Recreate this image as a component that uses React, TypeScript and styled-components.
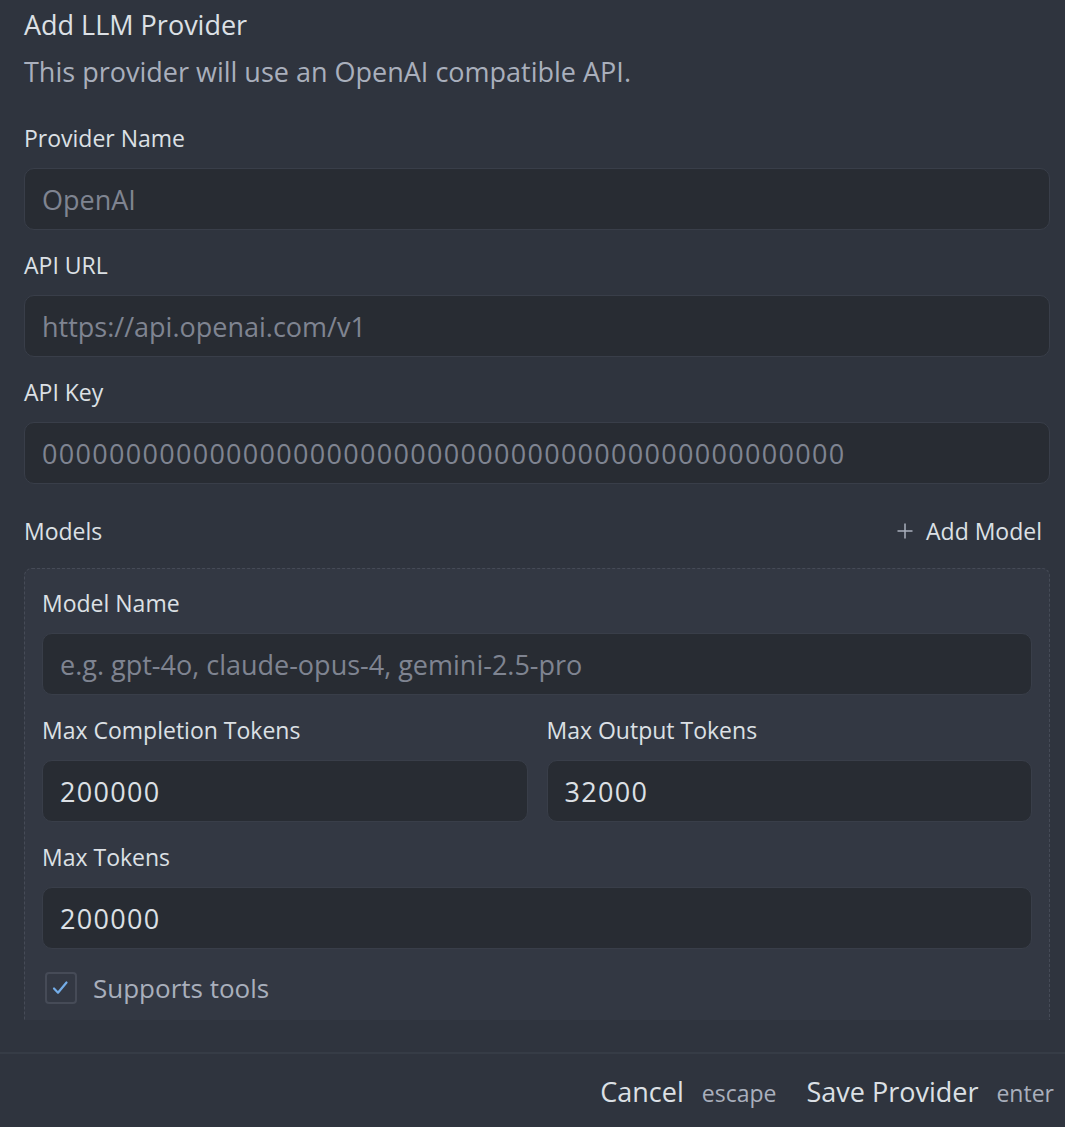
import React from "react";
import styled, { createGlobalStyle } from "styled-components";

const GlobalStyle = createGlobalStyle`
  html, body {
    margin: 0;
    padding: 0;
    background: #2f343e;
    font-family: "Open Sans", "Noto Sans", sans-serif;
    color: #dce0e5;
  }
  * { box-sizing: border-box; }
`;

const Page = styled.div`
  height: 100vh;
  display: flex;
  flex-direction: column;
`;

const Content = styled.div`
  flex: 1;
  min-height: 0;
  overflow: hidden;
  margin-bottom: 32px;
  padding: 8px 15px 0 24px;
  display: flex;
  flex-direction: column;
`;

const Title = styled.h1`
  margin: 0;
  font-size: 27px;
  line-height: 34px;
  font-weight: 400;
  color: #dce0e5;
`;

const Subtitle = styled.p`
  margin: 12.5px 0 0;
  font-size: 27px;
  line-height: 34px;
  color: #a9afbc;
`;

const Form = styled.div`
  margin-top: 35.5px;
  display: flex;
  flex-direction: column;
  gap: 21px;
`;

const Field = styled.div`
  display: flex;
  flex-direction: column;
  gap: 16px;
  min-width: 0;
`;

const Label = styled.label`
  font-size: 23px;
  line-height: 28px;
  color: #dce0e5;
`;

const TextInput = styled.input<{ $numeric?: boolean }>`
  height: 62px;
  width: 100%;
  border: 1px solid #393e49;
  border-radius: 10px;
  background: #282c33;
  padding: 0 17px;
  font-family: inherit;
  font-size: 27px;
  letter-spacing: ${(p) => (p.$numeric ? "1.3px" : "0")};
  color: #dce0e5;
  outline: none;
  &::placeholder {
    color: #7f8491;
  }
`;

const SectionHeader = styled.div`
  margin-top: 33px;
  display: flex;
  align-items: center;
  justify-content: space-between;
`;

const AddButton = styled.button`
  display: flex;
  align-items: center;
  gap: 13px;
  background: transparent;
  border: none;
  padding: 0 8px 0 0;
  font-family: inherit;
  font-size: 23px;
  line-height: 28px;
  color: #dce0e5;
  cursor: pointer;
`;

const ModelCard = styled.div`
  flex-shrink: 0;
  margin-top: 23px;
  border: 1px dashed #464b57;
  border-radius: 8px;
  background: #333843;
  padding: 20px 17px 40px;
  display: flex;
  flex-direction: column;
  gap: 21px;
`;

const TwoCols = styled.div`
  display: grid;
  grid-template-columns: 1fr 1fr;
  gap: 19px;
`;

const CheckRow = styled.label`
  display: flex;
  align-items: center;
  gap: 16px;
  margin: 2px 0 0 3px;
  font-size: 26px;
  line-height: 32px;
  color: #a9afbc;
`;

const CheckBox = styled.span`
  width: 32px;
  height: 32px;
  border: 2px solid #464b57;
  border-radius: 4px;
  display: flex;
  align-items: center;
  justify-content: center;
  flex-shrink: 0;
`;

const Footer = styled.div`
  height: 75px;
  flex-shrink: 0;
  border-top: 2px solid #363c46;
  display: flex;
  align-items: center;
  justify-content: flex-end;
  padding: 2px 11px 0 0;
  gap: 30px;
`;

const Action = styled.div`
  display: flex;
  align-items: baseline;
  gap: 18px;
`;

const ActionLabel = styled.span`
  font-size: 27px;
  color: #dce0e5;
`;

const KeyHint = styled.span`
  font-size: 23px;
  color: #a9afbc;
`;

const PlusIcon = () => (
  <svg width="16" height="16" viewBox="0 0 16 16" fill="none">
    <path d="M0.5 8h15M8 0.5v15" stroke="#a9afbc" strokeWidth="1.5" />
  </svg>
);

const CheckIcon = () => (
  <svg width="28" height="28" viewBox="0 0 28 28" fill="none">
    <path
      d="M7 14.5l4 4.2L19.5 8.5"
      stroke="#74ade8"
      strokeWidth="2.2"
      strokeLinecap="round"
      strokeLinejoin="round"
    />
  </svg>
);

export default function App() {
  return (
    <>
      <GlobalStyle />
      <Page>
        <Content>
          <Title>Add LLM Provider</Title>
          <Subtitle>This provider will use an OpenAI compatible API.</Subtitle>
          <Form>
            <Field>
              <Label>Provider Name</Label>
              <TextInput placeholder="OpenAI" />
            </Field>
            <Field>
              <Label>API URL</Label>
              <TextInput placeholder="https://api.openai.com/v1" />
            </Field>
            <Field>
              <Label>API Key</Label>
              <TextInput $numeric placeholder={"0".repeat(48)} />
            </Field>
          </Form>
          <SectionHeader>
            <Label>Models</Label>
            <AddButton>
              <PlusIcon />
              Add Model
            </AddButton>
          </SectionHeader>
          <ModelCard>
            <Field>
              <Label>Model Name</Label>
              <TextInput placeholder="e.g. gpt-4o, claude-opus-4, gemini-2.5-pro" />
            </Field>
            <TwoCols>
              <Field>
                <Label>Max Completion Tokens</Label>
                <TextInput $numeric defaultValue="200000" />
              </Field>
              <Field>
                <Label>Max Output Tokens</Label>
                <TextInput $numeric defaultValue="32000" />
              </Field>
            </TwoCols>
            <Field>
              <Label>Max Tokens</Label>
              <TextInput $numeric defaultValue="200000" />
            </Field>
            <CheckRow>
              <CheckBox>
                <CheckIcon />
              </CheckBox>
              Supports tools
            </CheckRow>
          </ModelCard>
        </Content>
        <Footer>
          <Action>
            <ActionLabel>Cancel</ActionLabel>
            <KeyHint>escape</KeyHint>
          </Action>
          <Action>
            <ActionLabel>Save Provider</ActionLabel>
            <KeyHint>enter</KeyHint>
          </Action>
        </Footer>
      </Page>
    </>
  );
}
